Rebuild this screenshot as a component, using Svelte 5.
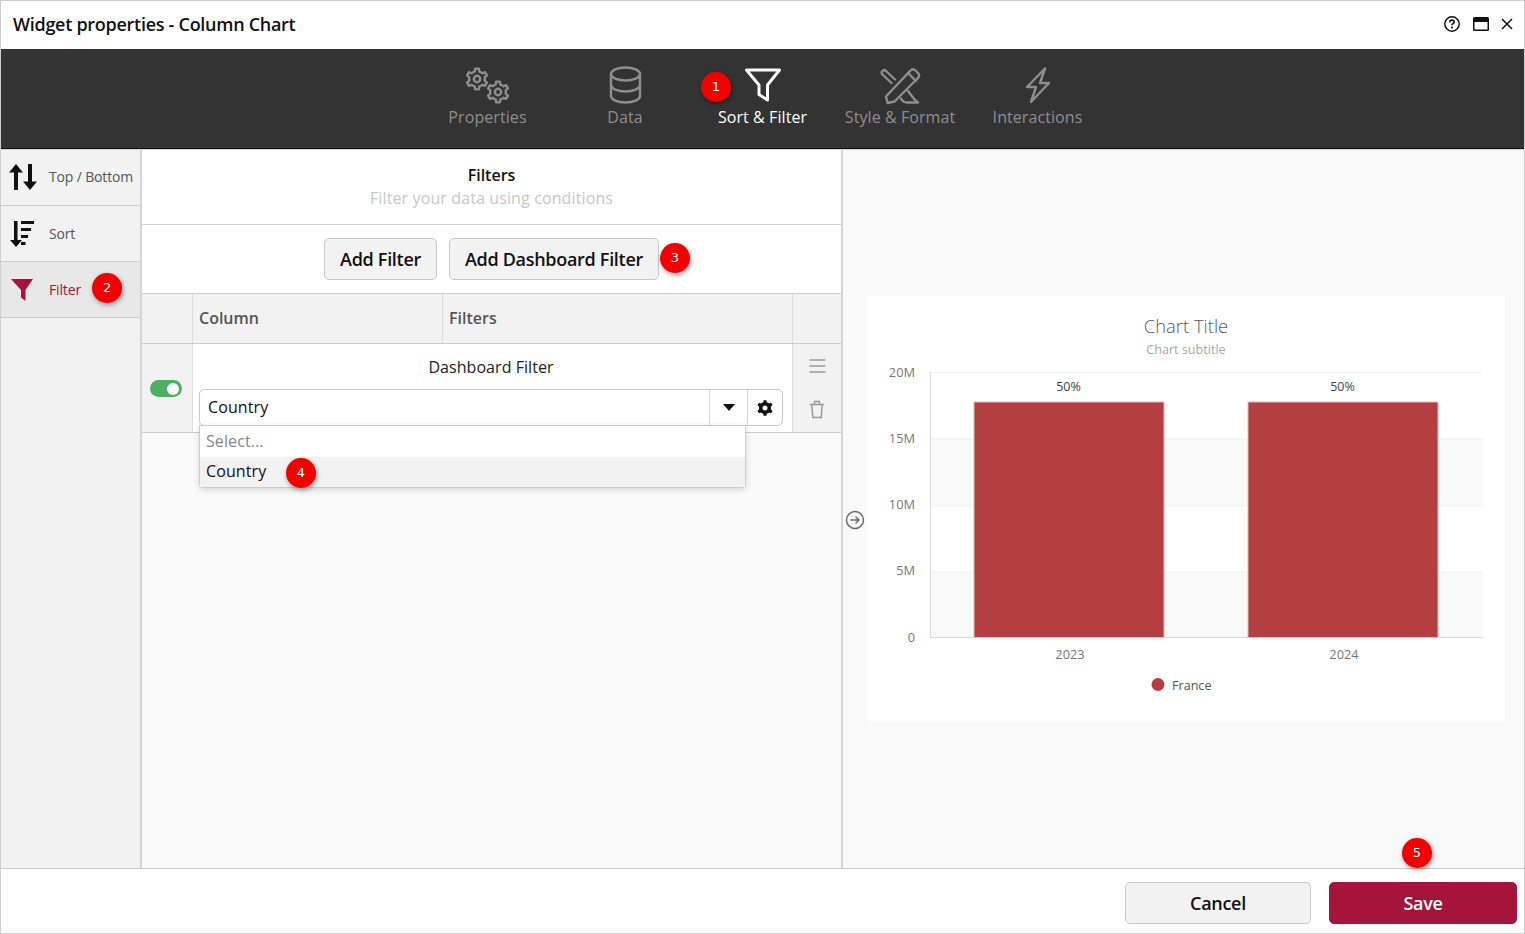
<script lang="ts">
  // gear outline with rounded-ish teeth, used for both the tab icon and the combo button
  function gear(cx: number, cy: number, r: number, teeth = 6) {
    const pts: string[] = [];
    const step = (Math.PI * 2) / teeth;
    for (let i = 0; i < teeth; i++) {
      const a = i * step - Math.PI / 2;
      const list = [
        [r * 0.74, a - step * 0.5],
        [r * 0.76, a - step * 0.27],
        [r, a - step * 0.17],
        [r, a + step * 0.17],
        [r * 0.76, a + step * 0.27]
      ];
      for (const [d, t] of list) {
        pts.push(`${(cx + d * Math.cos(t)).toFixed(2)} ${(cy + d * Math.sin(t)).toFixed(2)}`);
      }
    }
    return 'M' + pts.join('L') + 'Z';
  }

  const tabs = [
    { id: 'props', label: 'Properties' },
    { id: 'data', label: 'Data' },
    { id: 'sort', label: 'Sort & Filter', active: true },
    { id: 'style', label: 'Style & Format' },
    { id: 'inter', label: 'Interactions' }
  ];

  const yTicks = [
    { label: '20M', y: 372.5, grid: 372.5 },
    { label: '15M', y: 438.5, grid: 439 },
    { label: '10M', y: 504.5, grid: 506 },
    { label: '5M', y: 570.5, grid: 572 },
    { label: '0', y: 638 }
  ];

  const bars = [
    { x: 107, year: '2023' },
    { x: 381, year: '2024' }
  ];
</script>

<div class="window">
  <header class="titlebar">
    <span class="title">Widget properties - Column Chart</span>
    <div class="win-icons">
      <svg width="18" height="18" viewBox="0 0 18 18">
        <circle cx="9" cy="9" r="7.2" fill="none" stroke="#111" stroke-width="1.5" />
        <path d="M6.8 7.2c0-1.3 1-2.1 2.2-2.1s2.2.8 2.2 2c0 1.6-2.2 1.6-2.2 3.2" fill="none" stroke="#111" stroke-width="1.6" />
        <rect x="8.1" y="11.6" width="1.8" height="1.8" fill="#111" />
      </svg>
      <svg width="16" height="14" viewBox="0 0 16 14">
        <rect x="0" y="0" width="16" height="14" rx="1.5" fill="#111" />
        <rect x="1.5" y="5" width="13" height="7.5" fill="#fff" />
      </svg>
      <svg width="12" height="12" viewBox="0 0 12 12">
        <path d="M1 1l10 10M11 1L1 11" stroke="#111" stroke-width="1.5" fill="none" />
      </svg>
    </div>
  </header>

  <nav class="tabs">
    {#each tabs as tab}
      <div class="tab" class:active={tab.active}>
        <svg class="tab-icon" width="52" height="40" viewBox="0 0 52 40" fill="none" stroke="currentColor" stroke-width="2.4" stroke-linejoin="round" stroke-linecap="round">
          {#if tab.id === 'props'}
            <path d="{gear(15, 14, 10.5)}" />
            <circle cx="15" cy="14" r="3.2" />
            <path d="{gear(36, 27, 10.5)}" />
            <circle cx="36" cy="27" r="3.2" />
          {:else if tab.id === 'data'}
            <ellipse cx="26.5" cy="9" rx="14.5" ry="6.5" />
            <path d="M12 9v22c0 3.6 6.500 6.500 14.500 6.500S41 34.600 41 31V9" />
            <path d="M12 20c0 3.600 6.500 6.500 14.500 6.500S41 23.600 41 20" />
          {:else if tab.id === 'sort'}
            <path d="M9.500 5h33L30.500 20v15L22 29.500V20z" stroke-width="3" />
          {:else if tab.id === 'style'}
            <path d="M12 31.500l1.500 6.500 7-1.500L44 13c1.500-1.500 1.500-3.500 0-5l-2.500-2.500c-1.500-1.500-3.500-1.500-5 0z" />
            <path d="M34 8l8 8" />
            <path d="M21 14.500L12 6c-1-1-2.500-1-3.500 0s-1 2.500 0 3.500l9 8.500" />
            <path d="M34 26l5 6.500c1 2 3 3.500 5 5H33c-3 0-5-2-6-4" />
          {:else}
            <path d="M33 3.500L15 22h9l-5 15 18-19h-9z" />
          {/if}
        </svg>
        <span>{tab.label}</span>
      </div>
    {/each}
    <span class="badge badge-1">1</span>
  </nav>

  <div class="content">
    <aside class="side">
      <div class="side-item">
        <svg width="30" height="30" viewBox="0 0 30 30" fill="#111">
          <path d="M8 2l7 8.500h-5V28H6V10.500H1zM20 2h4v17.500h5L22 28l-7-8.500h5z" />
        </svg>
        <span>Top / Bottom</span>
      </div>
      <div class="side-item">
        <svg width="30" height="30" viewBox="0 0 30 30" fill="#111">
          <path d="M6 2h3.500v19H14l-6 7-6-7h4zM13 2h13v3H13zM13 9h10v3H13zM13 16h7v3h-7zM13 23h4.500v3H13z" />
        </svg>
        <span>Sort</span>
      </div>
      <div class="side-item selected">
        <svg width="30" height="30" viewBox="0 0 30 30" fill="#a5143a">
          <path d="M3 3h22L17.500 14v11L13 21.500V14z" transform="translate(0 1)" />
        </svg>
        <span>Filter</span>
        <span class="badge badge-2">2</span>
      </div>
    </aside>

    <main class="main">
      <div class="panel-head">
        <strong>Filters</strong>
        <span>Filter your data using conditions</span>
      </div>
      <div class="actions">
        <button class="btn">Add Filter</button>
        <div class="btn-wrap">
          <button class="btn">Add Dashboard Filter</button>
          <span class="badge badge-3">3</span>
        </div>
      </div>
      <div class="table-head">
        <div class="c-toggle"></div>
        <div class="c-col">Column</div>
        <div class="c-filters">Filters</div>
        <div class="c-acts"></div>
      </div>
      <div class="table-row">
        <div class="row-toggle"><span class="switch"></span></div>
        <div class="row-body">
          <div class="row-title">Dashboard Filter</div>
          <div class="combo-wrap">
            <div class="combo">
              <div class="combo-value">Country</div>
              <div class="combo-btn">
                <svg width="12" height="7" viewBox="0 0 12 7"><path d="M0 0h12L6 7z" fill="#111" /></svg>
              </div>
              <div class="combo-btn gear-btn">
                <svg width="16" height="16" viewBox="0 0 16 16">
                  <path d="{gear(8, 8, 8)} M8 5.500a2.500 2.500 0 1 0 0 5 2.500 2.500 0 0 0 0-5z" fill="#111" fill-rule="evenodd" />
                </svg>
              </div>
            </div>
            <div class="menu">
              <div class="menu-item placeholder">Select...</div>
              <div class="menu-item hovered">Country<span class="badge badge-4">4</span></div>
            </div>
          </div>
        </div>
        <div class="row-acts">
          <svg width="17" height="14" viewBox="0 0 17 14">
            <path d="M0.500 1h16M0.500 7h16M0.500 13h16" stroke="#999" stroke-width="1.500" fill="none" />
          </svg>
          <svg width="16" height="19" viewBox="0 0 16 19" fill="none" stroke="#999" stroke-width="1.500">
            <path d="M1 4.500h14M5.500 4.500V1.500h5v3M2.800 4.500l1 13h8.400l1-13" />
          </svg>
        </div>
      </div>
    </main>

    <section class="preview">
      <div class="gutter">
        <svg width="20" height="20" viewBox="0 0 20 20" fill="none" stroke="#666" stroke-width="1.400">
          <circle cx="10" cy="10" r="8.500" />
          <path d="M5.500 10h8.500M10.500 6.500L14 10l-3.500 3.500" />
        </svg>
      </div>
      <div class="chart-card">
        <svg class="chart" width="638" height="425" viewBox="867 296 638 425">
          <text x="1186" y="333" text-anchor="middle" class="c-title">Chart Title</text>
          <text x="1186" y="354" text-anchor="middle" class="c-sub">Chart subtitle</text>

          <rect x="931" y="439" width="552" height="67" fill="#f9f9f9" />
          <rect x="931" y="572" width="552" height="65" fill="#f9f9f9" />
          {#each yTicks as t}
            {#if t.grid}
              <line x1="931" x2="1483" y1={t.grid} y2={t.grid} stroke="#f0f0f0" />
            {/if}
            <text x="915" y={t.y + 4} text-anchor="end" class="c-axis">{t.label}</text>
          {/each}
          <line x1="930.500" x2="930.500" y1="372" y2="638" stroke="#d9d9d9" />
          <line x1="930" x2="1483" y1="637.500" y2="637.500" stroke="#d9d9d9" />

          {#each bars as b}
            <rect x={867 + b.x} y="402" width="190" height="235.500" fill="#b33f40" stroke="#e3bcbc" stroke-width="1" />
            <text x={867 + b.x + 94.500} y="391" text-anchor="middle" class="c-label">50%</text>
            <text x={867 + b.x + 96} y="659" text-anchor="middle" class="c-axis">{b.year}</text>
          {/each}

          <circle cx="1158" cy="684.500" r="6.500" fill="#b33f40" />
          <text x="1172" y="690" class="c-legend">France</text>
        </svg>
      </div>
    </section>
  </div>

  <footer class="footer">
    <button class="btn cancel">Cancel</button>
    <div class="save-wrap">
      <span class="badge badge-5">5</span>
      <button class="btn save">Save</button>
    </div>
  </footer>
</div>

<style>
  :global(body) { margin: 0; background: #fff; }
  .window { box-sizing: border-box; width: 1525px; height: 934px; display: flex; flex-direction: column; border: 1px solid #cfcfcf; font-family: "Open Sans", sans-serif; color: #111; overflow: hidden; }

  .titlebar { flex: 0 0 48px; box-sizing: border-box; display: flex; align-items: center; justify-content: space-between; padding: 0 11px 2px 12px; background: #fff; }
  .title { font-size: 18px; font-weight: 600; letter-spacing: -0.28px; }
  .win-icons { display: flex; align-items: center; gap: 12px; }

  .tabs { position: relative; flex: 0 0 100px; display: flex; justify-content: center; background: #333; border-bottom: 1px solid #111; box-sizing: border-box; }
  .tab { width: 137.5px; display: flex; flex-direction: column; align-items: center; padding-top: 16px; color: #8e8e8e; font-size: 16px; line-height: 22px; box-sizing: border-box; }
  .tab span { margin-top: 1px; letter-spacing: 0.08px; }
  .tab.active { color: #fff; }
  .tab-icon { display: block; }

  .badge { position: absolute; width: 30px; height: 30px; border-radius: 50%; background: #f40000; color: #fff; font: 13px/30px "DejaVu Sans", sans-serif; text-align: center; box-shadow: 1px 2px 5px rgba(0, 0, 0, 0.4); }
  .badge-1 { left: 700px; top: 23px; }
  .badge-2 { left: 91px; top: 11px; }
  .badge-3 { right: -31px; top: 5px; }
  .badge-4 { left: 86px; top: 1px; }
  .badge-5 { left: 73px; top: -44px; }

  .content { flex: 1; min-height: 0; display: flex; border-top: 1px solid #d5d5d5; }

  .side { flex: 0 0 139px; background: #f2f2f2; border-right: 2px solid #d5d5d5; }
  .side-item { position: relative; height: 56px; box-sizing: border-box; display: flex; align-items: center; gap: 11px; padding: 0 0 0 7px; border-bottom: 1px solid #ccc; font-size: 14px; letter-spacing: -0.15px; color: #555; }
  .side-item:first-child { padding-bottom: 2px; }
  .side-item.selected { background: #e8e8e8; color: #a5143a; }

  .main { flex: 0 0 699px; background: #fafafa; border-right: 2px solid #d5d5d5; display: flex; flex-direction: column; }
  .panel-head { height: 75px; box-sizing: border-box; background: #fff; border-bottom: 1px solid #ccc; display: flex; flex-direction: column; align-items: center; padding-top: 14px; }
  .panel-head strong { font-size: 16px; font-weight: 600; line-height: 22px; }
  .panel-head span { font-size: 16px; line-height: 24px; color: #c8c8c8; letter-spacing: 0.12px; }

  .actions { height: 69px; box-sizing: border-box; background: #fff; border-bottom: 1px solid #ccc; display: flex; justify-content: center; align-items: center; gap: 12px; }
  .btn-wrap { position: relative; }
  .btn { font-family: inherit; font-size: 18px; font-weight: 550; letter-spacing: -0.3px; height: 42px; padding: 0 15px; background: #f2f2f2; border: 1px solid #c8c8c8; border-radius: 5px; color: #111; box-sizing: border-box; }

  .table-head { height: 50px; box-sizing: border-box; display: flex; background: #f2f2f2; border-bottom: 1px solid #ccc; font-size: 16px; font-weight: 600; color: #555; line-height: 49px; }
  .c-toggle { flex: 0 0 50px; border-right: 1px solid #ddd; }
  .c-col { flex: 0 0 250px; box-sizing: border-box; padding-left: 6px; border-right: 1px solid #ddd; }
  .c-filters { flex: 0 0 350px; box-sizing: border-box; padding-left: 6px; border-right: 1px solid #ddd; }
  .c-acts { flex: 1; }

  .table-row { height: 89px; box-sizing: border-box; display: flex; background: #fff; border-bottom: 1px solid #ccc; }
  .row-toggle { flex: 0 0 51px; box-sizing: border-box; background: #f2f2f2; border-right: 1px solid #ddd; display: flex; justify-content: center; padding: 36px 3px 0 0; }
  .switch { position: relative; width: 32px; height: 17px; border-radius: 9px; background: #4caf63; }
  .switch::after { content: ""; position: absolute; right: 3px; top: 2.500px; width: 12px; height: 12px; border-radius: 50%; background: #fff; }
  .row-body { flex: 0 0 599px; box-sizing: border-box; padding: 0 9px 0 6px; }
  .row-title { text-align: center; font-size: 16px; line-height: 22px; padding-top: 12px; height: 45px; box-sizing: border-box; color: #222; letter-spacing: 0.06px; }
  .combo-wrap { position: relative; }
  .combo { display: flex; height: 37px; box-sizing: border-box; border: 1px solid #c8c8c8; border-radius: 5px; background: #fff; }
  .combo-value { flex: 1; font-size: 16px; line-height: 35px; padding-left: 8px; letter-spacing: 0.1px; }
  .combo-btn { width: 37px; border-left: 1px solid #d5d5d5; display: flex; align-items: center; justify-content: center; }
  .gear-btn { width: 34px; }
  .menu { position: absolute; left: 0; top: 36px; width: 547px; box-sizing: border-box; background: #fff; border: 1px solid #ccc; border-radius: 0 0 4px 4px; box-shadow: 0 2px 6px rgba(0, 0, 0, 0.15); z-index: 2; }
  .menu-item { position: relative; height: 30px; line-height: 29px; font-size: 16px; padding-left: 6px; letter-spacing: 0.1px; }
  .placeholder { color: #888; height: 31px; line-height: 31px; }
  .hovered { background: #f2f2f2; }
  .row-acts { flex: 1; background: #f2f2f2; border-left: 1px solid #ddd; display: flex; flex-direction: column; align-items: center; gap: 27px; padding-top: 15px; box-sizing: border-box; }

  .preview { flex: 1; display: flex; background: #f9f9f9; }
  .gutter { flex: 0 0 24px; display: flex; align-items: center; justify-content: center; padding-top: 22px; box-sizing: border-box; }
  .chart-card { margin: 146px 0 0 0; height: 425px; width: 638px; background: #fff; }
  .chart { display: block; font-family: "Open Sans", sans-serif; }
  .c-title { font-size: 18.4px; font-weight: 300; fill: #555c63; }
  .c-sub { font-size: 12.6px; fill: #a8a8a8; }
  .c-axis { font-size: 12.8px; fill: #777; }
  .c-label { font-size: 12.5px; fill: #444; }
  .c-legend { font-size: 12.6px; fill: #555; }

  .footer { flex: 0 0 65px; box-sizing: border-box; background: #fff; border-top: 1px solid #ccc; display: flex; justify-content: flex-end; align-items: flex-start; gap: 18px; padding: 13px 7px 0 0; }
  .save-wrap { position: relative; }
  .cancel { width: 186px; }
  .save { width: 188px; background: #a5143a; border-color: #a5143a; color: #fff; }
</style>
